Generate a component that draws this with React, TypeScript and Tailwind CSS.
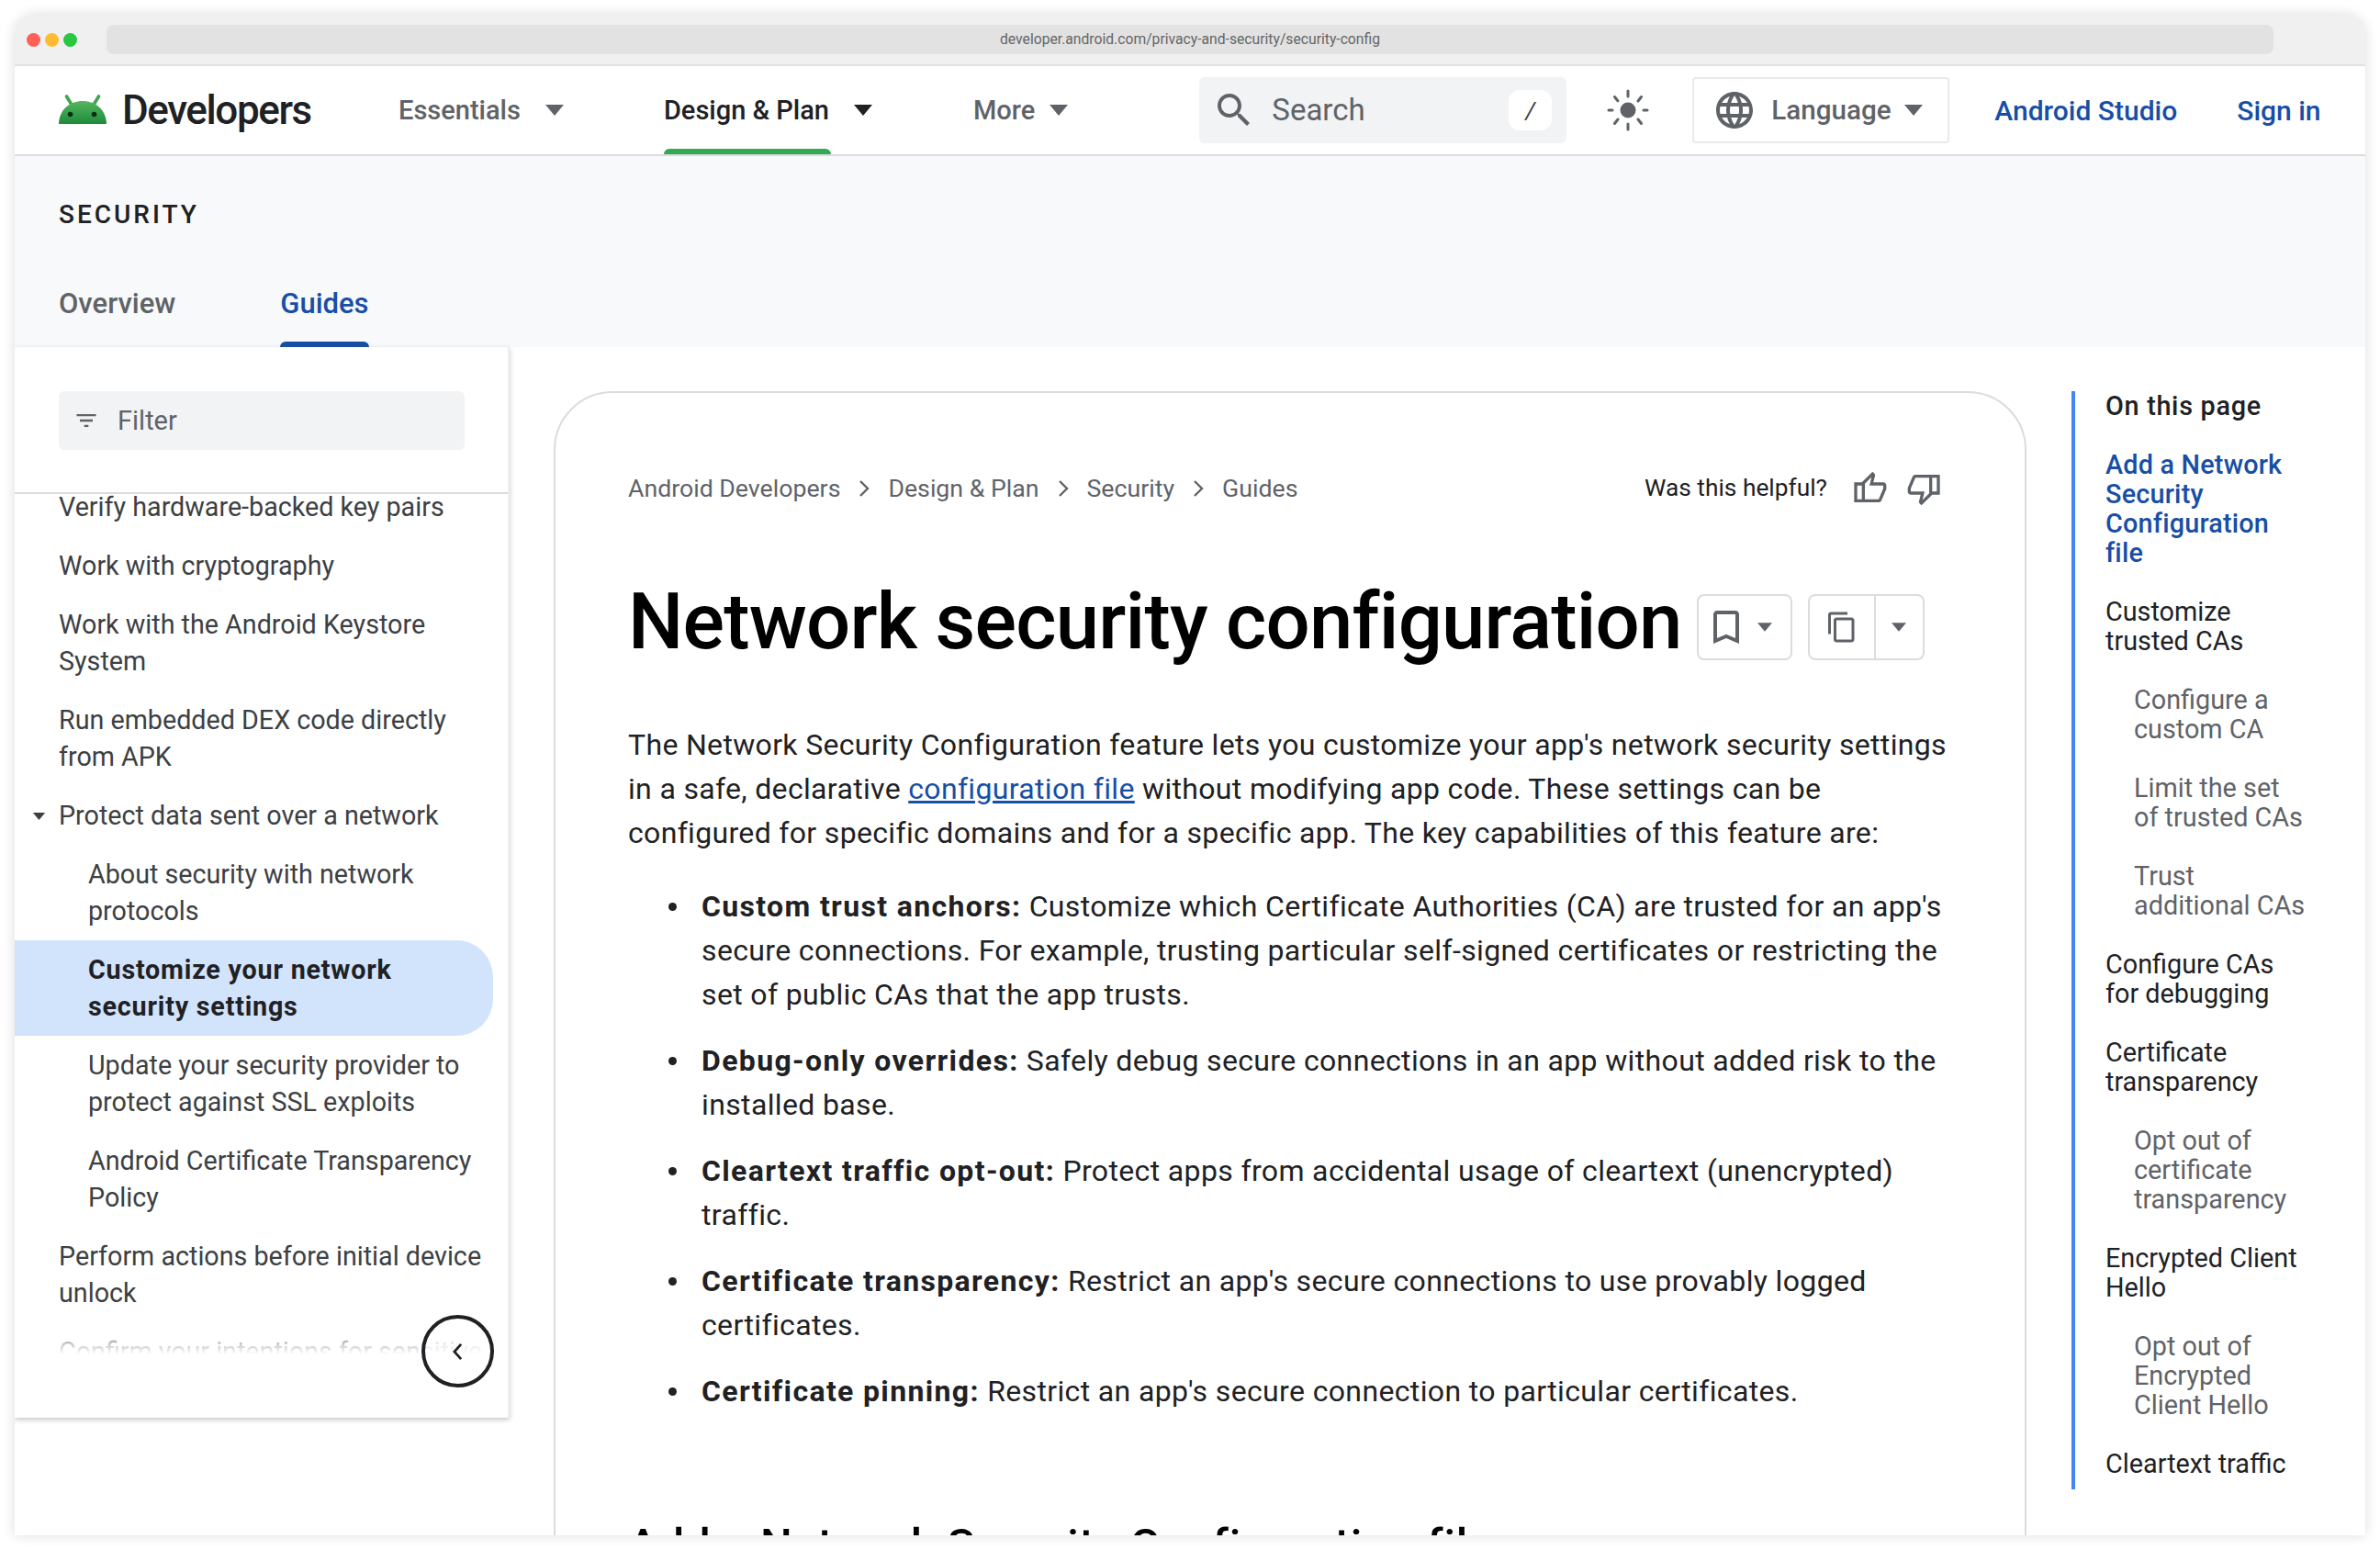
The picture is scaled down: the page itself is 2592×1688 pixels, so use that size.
import React from 'react';

const font = 'font-["Roboto","Noto_Sans",sans-serif]';

const Caret = ({ className }: { className: string }) => (
  <svg viewBox="0 0 10 6" className={className} fill="currentColor">
    <path d="M0 0h10L5 6z" />
  </svg>
);

const Mat = ({ d, className, box = '0 0 24 24' }: { d: string; className: string; box?: string }) => (
  <svg viewBox={box} className={className} fill="currentColor">
    <path d={d} />
  </svg>
);

const ICONS = {
  search:
    'M15.5 14h-.79l-.28-.27C15.41 12.59 16 11.11 16 9.5 16 5.91 13.09 3 9.5 3S3 5.91 3 9.5 5.91 16 9.5 16c1.61 0 3.09-.59 4.23-1.57l.27.28v.79l5 4.99L20.49 19l-4.99-5zm-6 0C7.01 14 5 11.99 5 9.5S7.01 5 9.5 5 14 7.01 14 9.5 11.99 14 9.5 14z',
  globe:
    'M11.99 2C6.47 2 2 6.48 2 12s4.47 10 9.99 10C17.52 22 22 17.52 22 12S17.52 2 11.99 2zm6.93 6h-2.95c-.32-1.25-.78-2.45-1.38-3.56 1.84.63 3.37 1.91 4.33 3.56zM12 4.04c.83 1.2 1.48 2.53 1.91 3.96h-3.82c.43-1.43 1.08-2.76 1.91-3.96zM4.26 14C4.1 13.36 4 12.69 4 12s.1-1.36.26-2h3.38c-.08.66-.14 1.32-.14 2 0 .68.06 1.34.14 2H4.26zm.82 2h2.95c.32 1.25.78 2.45 1.38 3.56-1.84-.63-3.37-1.9-4.33-3.56zm2.95-8H5.08c.96-1.66 2.49-2.93 4.33-3.56C8.81 5.55 8.35 6.75 8.03 8zM12 19.96c-.83-1.2-1.48-2.53-1.91-3.96h3.82c-.43 1.43-1.08 2.76-1.91 3.96zM14.34 14H9.66c-.09-.66-.16-1.32-.16-2 0-.68.07-1.35.16-2h4.68c.09.65.16 1.32.16 2 0 .68-.07 1.34-.16 2zm.25 5.56c.6-1.11 1.06-2.31 1.38-3.56h2.95c-.96 1.65-2.49 2.93-4.33 3.56zM16.36 14c.08-.66.14-1.32.14-2 0-.68-.06-1.34-.14-2h3.38c.16.64.26 1.31.26 2s-.1 1.36-.26 2h-3.38z',
  thumbUp:
    'M720-120H280v-520l280-280 50 50q7 7 11.5 19t4.5 23v14l-44 174h258q32 0 56 24t24 56v80q0 7-2 15t-4 15L794-168q-9 20-30 34t-44 14Zm-360-80h360l120-280v-80H480l54-220-174 174v406Zm0-406v406-406Zm-80-34v80H160v360h120v80H80v-520h200Z',
  thumbDown:
    'M240-840h440v520L400-40l-50-50q-7-7-11.5-19t-4.5-23v-14l44-174H120q-32 0-56-24t-24-56v-80q0-7 2-15t4-15l120-282q9-20 30-34t44-14Zm360 80H240L120-480v80h360l-54 220 174-174v-406Zm0 406v-406 406Zm80 34v-80h120v-360H680v-80h200v520H680Z',
  bookmark: 'M17 3H7c-1.1 0-2 .9-2 2v16l7-3 7 3V5c0-1.1-.9-2-2-2zm0 15l-5-2.18L7 18V5h10v13z',
  copy: 'M16 1H4c-1.1 0-2 .9-2 2v14h2V3h12V1zm3 4H8c-1.1 0-2 .9-2 2v14c0 1.1.9 2 2 2h11c1.1 0 2-.9 2-2V7c0-1.1-.9-2-2-2zm0 16H8V7h11v14z',
  filter: 'M10 18h4v-2h-4v2zM3 6v2h18V6H3zm3 7h12v-2H6v2z',
};

const AndroidHead = () => (
  <svg viewBox="0 0 52 32" className="w-[52px] h-[32px] -translate-y-[1px]">
    <defs>
      <linearGradient id="droid" x1="0" y1="0" x2="0" y2="1">
        <stop offset="0" stopColor="#55b75e" />
        <stop offset="1" stopColor="#1f8a3c" />
      </linearGradient>
    </defs>
    <path d="M8.5 2 14 11M43.5 2 38 11" stroke="#3ea650" strokeWidth="3.6" strokeLinecap="round" />
    <path d="M0 31C1 16 12 7 26 7s25 9 26 24c0 .6-.4 1-1 1H1c-.6 0-1-.4-1-1z" fill="url(#droid)" />
    <circle cx="12.5" cy="21.5" r="2.8" fill="#0b2e14" />
    <circle cx="38.5" cy="21.5" r="2.8" fill="#0b2e14" />
  </svg>
);

const Sun = () => (
  <svg viewBox="0 0 48 48" className="w-[48px] h-[48px] text-[#5f6368]" fill="currentColor">
    <circle cx="24" cy="24" r="8.5" />
    <g stroke="currentColor" strokeWidth="3" strokeLinecap="round">
      <path d="M24 3v6M24 39v6M3 24h4M41 24h4M9.5 9.5l3.4 4.4M35 34l3.5 4.5M38.5 9.5 35 14M13 34l-3.5 4.5" />
    </g>
  </svg>
);

const TopItem = ({ label, active, caretGap }: { label: string; active?: boolean; caretGap: string }) => (
  <div className="relative h-[96px] flex items-center">
    <span className={`pt-[2px] text-[29px] font-medium ${active ? 'text-[#202124]' : 'text-[#5f6368]'}`}>{label}</span>
    <Caret className={`${caretGap} w-[20px] h-[12px] ${active ? 'text-[#202124]' : 'text-[#5f6368]'}`} />
    {active && <div className="absolute left-0 bottom-0 w-[182px] h-[6px] rounded-t-[6px] bg-[#34a853]" />}
  </div>
);

const sideItems: { t: string[]; indent?: boolean; active?: boolean; open?: boolean }[] = [
  { t: ['Verify hardware-backed key pairs'] },
  { t: ['Work with cryptography'] },
  { t: ['Work with the Android Keystore', 'System'] },
  { t: ['Run embedded DEX code directly', 'from APK'] },
  { t: ['Protect data sent over a network'], open: true },
  { t: ['About security with network', 'protocols'], indent: true },
  { t: ['Customize your network', 'security settings'], indent: true, active: true },
  { t: ['Update your security provider to', 'protect against SSL exploits'], indent: true },
  { t: ['Android Certificate Transparency', 'Policy'], indent: true },
  { t: ['Perform actions before initial device', 'unlock'] },
  { t: ['Confirm your intentions for sensitive', 'actions'] },
];

const SideItem = ({ t, indent, active, open }: (typeof sideItems)[number]) => (
  <div
    className={`relative w-[521px] py-[12px] leading-[40px] text-[28.7px] ${indent ? 'pl-[80px]' : 'pl-[48px]'} ${
      active ? 'bg-[#d2e3fc] rounded-r-[40px] font-bold tracking-[0.8px] text-[#202124]' : 'text-[#3c4043]'
    }`}
  >
    {open && <Caret className="absolute left-[19px] top-[29px] w-[15px] h-[8px] text-[#3c4043]" />}
    {t.map(line => (
      <div key={line} className="whitespace-nowrap">
        {line}
      </div>
    ))}
  </div>
);

const Crumb = ({ label, last }: { label: string; last?: boolean }) => (
  <>
    <span>{label}</span>
    {!last && (
      <svg viewBox="0 0 12 20" className="w-[12px] h-[20px] mx-[20px] text-[#5f6368]" fill="none" stroke="currentColor" strokeWidth="2.4">
        <path d="M2 2l8 8-8 8" />
      </svg>
    )}
  </>
);

const bullets = [
  {
    b: 'Custom trust anchors:',
    lines: [
      " Customize which Certificate Authorities (CA) are trusted for an app's",
      'secure connections. For example, trusting particular self-signed certificates or restricting the',
      'set of public CAs that the app trusts.',
    ],
  },
  {
    b: 'Debug-only overrides:',
    lines: [' Safely debug secure connections in an app without added risk to the', 'installed base.'],
  },
  {
    b: 'Cleartext traffic opt-out:',
    lines: [' Protect apps from accidental usage of cleartext (unencrypted)', 'traffic.'],
  },
  {
    b: 'Certificate transparency:',
    lines: [" Restrict an app's secure connections to use provably logged", 'certificates.'],
  },
  {
    b: 'Certificate pinning:',
    lines: [" Restrict an app's secure connection to particular certificates."],
  },
];

const tocItems: { t: string[]; sub?: boolean; cur?: boolean }[] = [
  { t: ['Add a Network', 'Security', 'Configuration', 'file'], cur: true },
  { t: ['Customize', 'trusted CAs'] },
  { t: ['Configure a', 'custom CA'], sub: true },
  { t: ['Limit the set', 'of trusted CAs'], sub: true },
  { t: ['Trust', 'additional CAs'], sub: true },
  { t: ['Configure CAs', 'for debugging'] },
  { t: ['Certificate', 'transparency'] },
  { t: ['Opt out of', 'certificate', 'transparency'], sub: true },
  { t: ['Encrypted Client', 'Hello'] },
  { t: ['Opt out of', 'Encrypted', 'Client Hello'], sub: true },
  { t: ['Cleartext traffic'] },
];

export default function App() {
  return (
    <div className={`w-[2592px] h-[1688px] bg-white pt-[16px] pl-[16px] overflow-hidden ${font}`}>
      <div className="w-[2560px] h-[1656px] bg-white rounded-t-[22px] overflow-hidden flex flex-col shadow-[0_0_14px_rgba(0,0,0,0.14)]">
        {/* browser chrome */}
        <div className="h-[56px] shrink-0 bg-[#f0f0f0] border-b-2 border-[#e2e2e2] flex items-center pl-[13px] pr-[100px]">
          <div className="flex gap-[5px]">
            <span className="w-[15px] h-[15px] rounded-full bg-[#ff5f57]" />
            <span className="w-[15px] h-[15px] rounded-full bg-[#febc2e]" />
            <span className="w-[15px] h-[15px] rounded-full bg-[#28c840]" />
          </div>
          <div className="ml-[32px] flex-1 h-[32px] rounded-[8px] bg-[#e2e2e2] flex items-center justify-center text-[15.7px] text-[#666]">
            developer.android.com/privacy-and-security/security-config
          </div>
        </div>

        {/* top nav */}
        <div className="h-[98px] shrink-0 bg-white border-b-2 border-[#dadce0] flex items-center pl-[48px] relative">
          <AndroidHead />
          <span className="ml-[17px] text-[44px] font-medium tracking-[-1.4px] text-[#202124] w-[264px]">Developers</span>
          <div className="w-[37px]" />
          <TopItem label="Essentials" caretGap="ml-[27px]" />
          <div className="w-[109px]" />
          <TopItem label="Design & Plan" active caretGap="ml-[27px]" />
          <div className="w-[110px]" />
          <TopItem label="More" caretGap="ml-[16px]" />
          <div className="w-[143px]" />
          <div className="w-[400px] h-[72px] rounded-[6px] bg-[#f1f3f4] flex items-center pl-[14px] text-[#5f6368]">
            <Mat d={ICONS.search} className="w-[48px] h-[48px]" />
            <span className="ml-[17px] text-[33px] text-[#5f6368]">Search</span>
            <span className="ml-auto mr-[16px] w-[47px] h-[44px] bg-white rounded-[12px] flex items-center justify-center italic text-[26px] text-[#3c4043]">
              /
            </span>
          </div>
          <div className="w-[43px]" />
          <Sun />
          <div className="w-[46px]" />
          <div className="w-[280px] h-[72px] rounded-[4px] border-2 border-[#e8eaed] flex items-center pl-[20px] text-[#5f6368]">
            <Mat d={ICONS.globe} className="w-[48px] h-[48px]" />
            <span className="ml-[16px] text-[29.6px] font-medium">Language</span>
            <Caret className="ml-[14px] w-[20px] h-[12px]" />
          </div>
          <div className="w-[49px]" />
          <span className="text-[30px] font-medium text-[#174ea6] whitespace-nowrap">Android Studio</span>
          <span className="ml-[65px] text-[30px] font-medium text-[#174ea6]">Sign in</span>
        </div>

        {/* section header */}
        <div className="h-[208px] shrink-0 bg-[#f8f9fa] pl-[48px] relative">
          <div className="pt-[44px] text-[28px] leading-[40px] font-medium tracking-[3px] text-[#202124]">SECURITY</div>
          <div className="mt-[57px] flex gap-[114px] text-[31px] leading-[40px] font-medium">
            <span className="text-[#5f6368]">Overview</span>
            <div className="relative h-[67px] text-[#174ea6]">
              Guides
              <div className="absolute left-0 right-0 bottom-0 h-[6px] rounded-t-[6px] bg-[#174ea6]" />
            </div>
          </div>
        </div>

        {/* body */}
        <div className="flex-1 flex min-h-0">
          {/* left nav */}
          <div className="w-[539px] h-[1166px] shrink-0 bg-white border-r-2 border-[#eceef0] shadow-[0_2px_5px_rgba(60,64,67,0.3)] relative flex flex-col">
            <div className="h-[160px] shrink-0 border-b-2 border-[#dadce0] pt-[48px] pl-[48px] relative z-10">
              <div className="w-[442px] h-[64px] rounded-[6px] bg-[#f1f3f4] flex items-center pl-[16px] text-[#5f6368]">
                <Mat d={ICONS.filter} className="w-[28px] h-[28px]" />
                <span className="ml-[20px] pt-[2px] text-[29px]">Filter</span>
              </div>
            </div>
            <div className="flex-1 overflow-hidden -mt-[18px]">
              {sideItems.map(it => (
                <SideItem key={it.t[0]} {...it} />
              ))}
            </div>
            <div className="absolute left-0 right-0 bottom-0 h-[108px] bg-gradient-to-b from-white/0 via-white via-[36%] to-white" />
            <div className="absolute left-[443px] top-[1054px] w-[79px] h-[79px] rounded-full border-[4px] border-[#202124] bg-white/60 flex items-center justify-center">
              <svg viewBox="0 0 14 22" className="w-[13px] h-[20px] text-[#202124]" fill="none" stroke="currentColor" strokeWidth="3">
                <path d="M11 2 3 11l8 9" />
              </svg>
            </div>
          </div>

          {/* article card */}
          <div className="ml-[48px] mt-[48px] w-[1604px] shrink-0 h-[1300px] border-2 border-[#dadce0] rounded-t-[64px] pl-[79px] pr-[60px] pt-[80px] text-[#202124]">
            <div className="flex items-center h-[48px] mr-[29px] text-[26.7px] text-[#5f6368]">
              <Crumb label="Android Developers" />
              <Crumb label="Design & Plan" />
              <Crumb label="Security" />
              <Crumb label="Guides" last />
              <span className="ml-auto text-[26.3px] text-[#202124]">Was this helpful?</span>
              <Mat d={ICONS.thumbUp} box="0 -960 960 960" className="ml-[26px] w-[40px] h-[40px]" />
              <Mat d={ICONS.thumbDown} box="0 -960 960 960" className="ml-[20px] w-[40px] h-[40px]" />
            </div>

            <div className="mt-[73px] flex items-center h-[96px]">
              <h1 className="text-[85px] leading-[96px] font-medium tracking-[-0.8px] text-[#000] whitespace-nowrap">
                Network security configuration
              </h1>
              <div className="ml-[16px] mt-[12px] w-[104px] h-[72px] rounded-[8px] border-2 border-[#dadce0] flex items-center pl-[6px] text-[#5f6368]">
                <Mat d={ICONS.bookmark} className="w-[48px] h-[48px]" />
                <Caret className="ml-[10px] w-[16px] h-[10px]" />
              </div>
              <div className="ml-[17px] mt-[12px] w-[127px] h-[72px] rounded-[8px] border-2 border-[#dadce0] flex items-center text-[#5f6368]">
                <div className="w-[72px] h-full border-r-2 border-[#dadce0] flex items-center justify-center">
                  <Mat d={ICONS.copy} className="w-[36px] h-[36px]" />
                </div>
                <Caret className="ml-[17px] w-[16px] h-[10px]" />
              </div>
            </div>

            <div className="mt-[62px] text-[32px] tracking-[0.33px] leading-[48px]">
              <div className="whitespace-nowrap">
                The Network Security Configuration feature lets you customize your app's network security settings
              </div>
              <div className="whitespace-nowrap">
                in a safe, declarative <span className="text-[#174ea6] underline">configuration file</span> without modifying app code. These settings can be
              </div>
              <div className="whitespace-nowrap">
                configured for specific domains and for a specific app. The key capabilities of this feature are:
              </div>
            </div>

            <ul className="mt-[32px] text-[32px] tracking-[0.36px] leading-[48px]">
              {bullets.map(item => (
                <li key={item.b} className="relative pl-[80px] mb-[24px]">
                  <span className="absolute left-[44px] top-[20px] w-[9px] h-[9px] rounded-full bg-[#202124]" />
                  {item.lines.map((line, i) => (
                    <div key={i} className="whitespace-pre">
                      {i === 0 && <b className="font-bold tracking-[1.35px]">{item.b}</b>}
                      {line}
                    </div>
                  ))}
                </li>
              ))}
            </ul>

            <h2 className="mt-[116px] text-[49px] leading-[56px] tracking-[0.9px] font-medium text-[#000] whitespace-nowrap">
              Add a Network Security Configuration file
            </h2>
          </div>

          {/* on this page */}
          <div className="ml-[49px] mt-[48px] w-[240px] h-[1196px] shrink-0 border-l-4 border-[#4285f4] pl-[33px] text-[28.8px] leading-[32px] text-[#202124]">
            <div className="font-medium tracking-[0.7px] pb-[32px]">On this page</div>
            {tocItems.map((it, i) => (
              <div
                key={i}
                className={`pb-[32px] whitespace-nowrap ${it.sub ? 'pl-[31px] text-[#5f6368]' : ''} ${it.cur ? 'text-[#174ea6] font-medium tracking-[0.2px]' : ''}`}
              >
                {it.t.map(line => (
                  <div key={line}>{line}</div>
                ))}
              </div>
            ))}
          </div>
        </div>
      </div>
    </div>
  );
}
